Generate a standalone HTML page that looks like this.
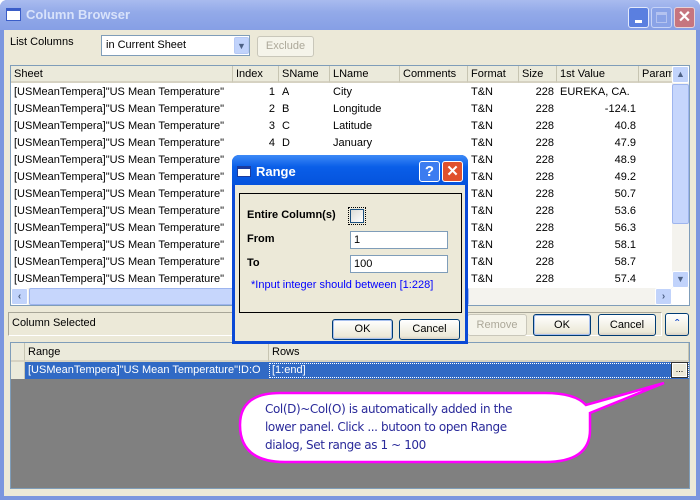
<!DOCTYPE html>
<html><head><style>
*{margin:0;padding:0;box-sizing:border-box}
body{width:700px;height:500px;overflow:hidden;background:#fff;font-family:"Liberation Sans",Tahoma,sans-serif;font-size:11px;color:#000;position:relative}
.a{position:absolute}
.btn{position:absolute;border:1px solid #003c74;border-radius:3px;background:linear-gradient(#fff,#ece9d8 85%,#d6d0c5);text-align:center;font-size:11px}
.hd{position:absolute;top:0;height:17px;line-height:16px;padding-left:3px;border-right:1px solid #c7c5b2;background:#ebeadb;border-bottom:2px solid #d6d2c2}
.c{position:absolute;height:17px;line-height:17px;white-space:nowrap;overflow:hidden}
</style></head><body>
<div class="a" style="left:0;top:0;width:700px;height:500px;background:#7b96df;border-radius:7px 7px 0 0"></div>
<div class="a" style="left:0;top:0;width:700px;height:30px;border-radius:7px 7px 0 0;background:linear-gradient(#a9bbef,#93aae9 40%,#869fe5)"></div>
<div class="a" style="left:6px;top:8px;width:15px;height:13px;background:#fff;border:1px solid #3a5dc8;border-top:3px solid #3a5dc8"></div>
<div class="a" style="left:26px;top:7px;font-size:13px;font-weight:bold;color:#d8e2fa">Column Browser</div>
<div class="a" style="left:628px;top:7px;width:21px;height:21px;border:1px solid #e3e9fb;border-radius:3px;background:#5a7fe0"><div class="a" style="left:6px;top:12px;width:7px;height:3px;background:#fff"></div></div>
<div class="a" style="left:651px;top:7px;width:21px;height:21px;border:1px solid #c6d3f7;border-radius:3px;background:#8aa3e7"><div class="a" style="left:4px;top:4px;width:11px;height:11px;border:1px solid #b4c3f0;border-top:3px solid #b4c3f0"></div></div>
<div class="a" style="left:674px;top:7px;width:21px;height:21px;border:1px solid #e7d2d6;border-radius:3px;background:#c6757f;color:#fff;font-size:16px;line-height:19px;text-align:center;font-weight:bold">✕</div>
<div class="a" style="left:4px;top:30px;width:692px;height:466px;background:#ece9d8"></div>
<div class="a" style="left:10px;top:36px">List Columns</div>
<div class="a" style="left:101px;top:35px;width:149px;height:21px;border:1px solid #7f9db9;background:#fff;padding:3px 4px">in Current Sheet</div>
<div class="a" style="left:234px;top:37px;width:15px;height:17px;background:#c1d3fb;border:1px solid #b6c9f5;border-radius:2px;color:#4d6185;font-size:9px;text-align:center;line-height:16px">&#9660;</div>
<div class="btn" style="left:257px;top:36px;width:57px;height:21px;line-height:19px;color:#aca899;border-color:#c9c7ba;background:#f5f4ea">Exclude</div>
<div class="a" style="left:10px;top:65px;width:680px;height:241px;border:1px solid #7f9db9;background:#fff;overflow:hidden">
<div class="hd" style="left:0;width:222px">Sheet</div>
<div class="hd" style="left:222px;width:46px">Index</div>
<div class="hd" style="left:268px;width:51px">SName</div>
<div class="hd" style="left:319px;width:70px">LName</div>
<div class="hd" style="left:389px;width:68px">Comments</div>
<div class="hd" style="left:457px;width:51px">Format</div>
<div class="hd" style="left:508px;width:38px">Size</div>
<div class="hd" style="left:546px;width:82px">1st Value</div>
<div class="hd" style="left:628px;width:40px">Param</div>
<div id="rows"></div>
<div class="a" style="left:661px;top:0;width:17px;height:222px;background:#f4f3ee"></div>
<div class="a" style="left:661px;top:0;width:17px;height:17px;background:#c1d3fb;border:1px solid #fff;border-radius:2px;color:#4d6185;font-size:9px;text-align:center;line-height:15px">&#9650;</div>
<div class="a" style="left:661px;top:18px;width:17px;height:140px;background:#c6d6fc;border:1px solid #9eb5ee;border-radius:2px"></div>
<div class="a" style="left:661px;top:205px;width:17px;height:17px;background:#c1d3fb;border:1px solid #fff;border-radius:2px;color:#4d6185;font-size:9px;text-align:center;line-height:15px">&#9660;</div>
<div class="a" style="left:0;top:222px;width:661px;height:17px;background:#f4f3ee"></div>
<div class="a" style="left:0;top:222px;width:17px;height:17px;background:#c1d3fb;border:1px solid #fff;border-radius:2px;color:#4d6185;font-size:10px;text-align:center;line-height:15px;font-weight:bold">&#8249;</div>
<div class="a" style="left:18px;top:222px;width:440px;height:17px;background:#c6d6fc;border:1px solid #9eb5ee;border-radius:2px"></div>
<div class="a" style="left:644px;top:222px;width:17px;height:17px;background:#c1d3fb;border:1px solid #fff;border-radius:2px;color:#4d6185;font-size:10px;text-align:center;line-height:15px;font-weight:bold">&#8250;</div>
</div>
<div class="a" style="left:8px;top:312px;width:654px;height:24px;border:1px solid #a8a698;border-right-color:#fff;border-bottom-color:#fff"></div>
<div class="a" style="left:12px;top:317px">Column Selected</div>
<div class="btn" style="left:467px;top:314px;width:60px;height:22px;line-height:20px;color:#aca899;border-color:#c9c7ba;background:#f5f4ea">Remove</div>
<div class="btn" style="left:533px;top:314px;width:58px;height:22px;line-height:20px;box-shadow:inset 0 0 0 1px #a9c1ef">OK</div>
<div class="btn" style="left:598px;top:314px;width:58px;height:22px;line-height:20px">Cancel</div>
<div class="btn" style="left:665px;top:313px;width:24px;height:23px;line-height:20px;color:#2151c9;font-weight:bold;font-size:12px">&#710;</div>
<div class="a" style="left:10px;top:342px;width:680px;height:147px;border:1px solid #7f9db9;background:#808080;overflow:hidden">
<div class="hd" style="left:0;width:14px;height:19px"></div>
<div class="hd" style="left:14px;width:244px;height:19px;line-height:19px">Range</div>
<div class="hd" style="left:258px;width:420px;height:19px;line-height:19px">Rows</div>
<div class="a" style="left:0;top:19px;width:14px;height:17px;background:#ebeadb;border-right:1px solid #c7c5b2"></div>
<div class="a" style="left:14px;top:19px;width:664px;height:17px;background:#316ac5;color:#fff;line-height:17px"><span style="padding-left:3px">[USMeanTempera]"US Mean Temperature"!D:O</span></div>
<div class="a" style="left:258px;top:20px;width:420px;height:15px;border:1px dotted #fff;color:#fff;line-height:13px;padding-left:2px">[1:end]</div>
<div class="a" style="left:661px;top:20px;width:15px;height:14px;background:#ece9d8;border:1px solid #fff;outline:1px solid #333;font-size:9px;text-align:center;line-height:11px">...</div>
</div>
<svg class="a" style="left:0;top:0" width="700" height="500">
<path d="M 280 393 Q 240 393 240 425 Q 240 462 285 462 L 545 462 Q 590 462 590 430 L 590 413 L 664 383 L 586 405 Q 575 393 545 393 Z" fill="#fff" stroke="#ff00ff" stroke-width="2.5"/>
</svg>
<div class="a" style="left:265px;top:400px;width:330px;white-space:nowrap;font-family:'DejaVu Sans',sans-serif;font-size:12px;line-height:18px;color:#2a2a9a;letter-spacing:-0.4px">Col(D)~Col(O) is automatically added in the<br>lower panel. Click ... butoon to open Range<br>dialog, Set range as 1 ~ 100</div>
<div class="a" style="left:232px;top:155px;width:236px;height:189px;background:#0a49d6;border-radius:7px 7px 0 0"></div>
<div class="a" style="left:232px;top:155px;width:236px;height:30px;border-radius:7px 7px 0 0;background:linear-gradient(#3d8af7,#0a5ee8 40%,#0553dc)"></div>
<div class="a" style="left:237px;top:166px;width:14px;height:11px;background:#fff;border:1px solid #1b3b9e;border-top:3px solid #1b3b9e"></div>
<div class="a" style="left:256px;top:164px;font-size:13px;font-weight:bold;color:#fff">Range</div>
<div class="a" style="left:419px;top:161px;width:21px;height:21px;border:1px solid #fff;border-radius:3px;background:#3c7cf0;color:#fff;font-size:15px;line-height:19px;text-align:center;font-weight:bold">?</div>
<div class="a" style="left:442px;top:161px;width:21px;height:21px;border:1px solid #fff;border-radius:3px;background:#e0512d;color:#fff;font-size:15px;line-height:19px;text-align:center;font-weight:bold">✕</div>
<div class="a" style="left:235px;top:185px;width:230px;height:156px;background:#ece9d8"></div>
<div class="a" style="left:239px;top:193px;width:223px;height:120px;border:1px solid #000"></div>
<div class="a" style="left:247px;top:209px;font-weight:bold">Entire Column(s)</div>
<div class="a" style="left:350px;top:209px;width:14px;height:14px;border:1px solid #1c5180;background:linear-gradient(135deg,#dcdcd7,#fff);outline:1px dotted #000;outline-offset:1px"></div>
<div class="a" style="left:247px;top:233px;font-weight:bold">From</div>
<div class="a" style="left:350px;top:231px;width:98px;height:18px;border:1px solid #7f9db9;background:#fff;padding:2px 3px">1</div>
<div class="a" style="left:247px;top:257px;font-weight:bold">To</div>
<div class="a" style="left:350px;top:255px;width:98px;height:18px;border:1px solid #7f9db9;background:#fff;padding:2px 3px">100</div>
<div class="a" style="left:251px;top:279px;color:#0000ff;font-size:11px">*Input integer should between [1:228]</div>
<div class="btn" style="left:332px;top:319px;width:61px;height:21px;line-height:19px;box-shadow:inset 0 0 0 1px #a9c1ef">OK</div>
<div class="btn" style="left:399px;top:319px;width:61px;height:21px;line-height:19px">Cancel</div>
<script>
var v=["EUREKA, CA.","-124.1","40.8","47.9","48.9","49.2","50.7","53.6","56.3","58.1","58.7","57.4"];
var ln=["City","Longitude","Latitude","January","February","March","April","May","June","July","August","September"];
var h="";
for(var i=0;i<12;i++){var t=18+17*i;
h+='<div class="c" style="left:3px;top:'+t+'px">[USMeanTempera]"US Mean Temperature"</div>'+
'<div class="c" style="left:222px;top:'+t+'px;width:42px;text-align:right">'+(i+1)+'</div>'+
'<div class="c" style="left:271px;top:'+t+'px">'+String.fromCharCode(65+i)+'</div>'+
'<div class="c" style="left:322px;top:'+t+'px">'+ln[i]+'</div>'+
'<div class="c" style="left:460px;top:'+t+'px">T&amp;N</div>'+
'<div class="c" style="left:508px;top:'+t+'px;width:35px;text-align:right">228</div>'+
'<div class="c" style="'+(i==0?'left:549px;':'left:546px;width:79px;text-align:right;')+'top:'+t+'px">'+v[i]+'</div>';}
document.getElementById("rows").innerHTML=h;
</script>
</body></html>
